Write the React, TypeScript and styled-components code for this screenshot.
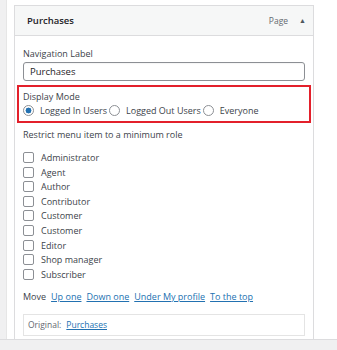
import React from 'react'
import styled, { createGlobalStyle } from 'styled-components'

const COLORS = {
  text: '#3c434a',
  dark: '#1d2327',
  muted: '#646970',
  border: '#dcdcde',
  field: '#8c8f94',
  link: '#2271b1',
  red: '#e3202b',
  gray: '#f0f0f1',
  head: '#f6f7f7',
}

const GlobalStyle = createGlobalStyle`
  body {
    margin: 0;
    background: #fff;
    font-family: 'Open Sans', 'Noto Sans', sans-serif;
    color: ${COLORS.text};
  }
`

const roles = [
  'Administrator',
  'Agent',
  'Author',
  'Contributor',
  'Customer',
  'Customer',
  'Editor',
  'Shop manager',
  'Subscriber',
]

const modes = [
  { label: 'Logged In Users', checked: true },
  { label: 'Logged Out Users', checked: false },
  { label: 'Everyone', checked: false },
]

const moves = ['Up one', 'Down one', 'Under My profile', 'To the top']

const App = () => {
  return (
    <>
      <GlobalStyle />
      <Page>
        <Top>
          <Strip />
          <Content>
            <Panel>
              <Header>
                <Title>Purchases</Title>
                <Controls>
                  <Type>Page</Type>
                  <Arrow>▲</Arrow>
                </Controls>
              </Header>

              <Body>
                <Label>Navigation Label</Label>
                <Input>Purchases</Input>

                <Highlight>
                  <Label>Display Mode</Label>
                  <RadioRow>
                    {modes.map(m => (
                      <RadioItem key={m.label}>
                        <Radio checked={m.checked} />
                        {m.label}
                      </RadioItem>
                    ))}
                  </RadioRow>
                </Highlight>

                <Label>Restrict menu item to a minimum role</Label>

                <Roles>
                  {roles.map((r, i) => (
                    <RoleItem key={i}>
                      <Box />
                      {r}
                    </RoleItem>
                  ))}
                </Roles>

                <MoveRow>
                  Move
                  {moves.map(m => (
                    <A key={m}>{m}</A>
                  ))}
                </MoveRow>

                <Original>
                  Original: <A>Purchases</A>
                </Original>
              </Body>
            </Panel>
          </Content>
        </Top>
        <Footer />
      </Page>
    </>
  )
}

const Page = styled('div')`
  width: 337px;
  height: 350px;
  display: flex;
  flex-direction: column;
  overflow: hidden;
`

const Top = styled('div')`
  height: 339px;
  display: flex;
`

const Strip = styled('div')`
  width: 6px;
  background: ${COLORS.gray};
  border-right: 1px solid #e6e6e6;
`

const Content = styled('div')`
  flex: 1;
  padding: 5px 0 0 7px;
`

const Panel = styled('div')`
  width: 300px;
  height: 100%;
  box-sizing: border-box;
  border: 1px solid ${COLORS.border};
  border-bottom: none;
  background: #fff;
`

const Header = styled('div')`
  height: 30px;
  box-sizing: border-box;
  background: ${COLORS.head};
  border-bottom: 1px solid ${COLORS.border};
  display: flex;
  align-items: center;
  justify-content: space-between;
  padding: 0 7px 0 12px;
`

const Title = styled('div')`
  font-size: 9.5px;
  font-weight: 600;
  color: ${COLORS.dark};
`

const Controls = styled('div')`
  display: flex;
  align-items: center;
  gap: 11px;
`

const Type = styled('span')`
  font-size: 8.5px;
  color: ${COLORS.muted};
`

const Arrow = styled('span')`
  font-size: 7px;
  color: #50575e;
`

const Body = styled('div')`
  padding: 11px 8px 0 8px;
  font-size: 9px;
`

const Label = styled('div')`
  line-height: 13px;
`

const Input = styled('div')`
  margin-top: 2px;
  height: 19px;
  box-sizing: border-box;
  border: 1px solid ${COLORS.field};
  border-radius: 3px;
  padding: 0 6px;
  display: flex;
  align-items: center;
  font-size: 9.5px;
  color: ${COLORS.dark};
  box-shadow: inset 0 1px 1px rgba(0, 0, 0, 0.04);
`

const Highlight = styled('div')`
  margin: 4px -6px 5px -6px;
  border: 2px solid ${COLORS.red};
  padding: 3px 4px 4px;
`

const RadioRow = styled('div')`
  display: flex;
  margin-top: 1px;
`

const RadioItem = styled('label')`
  display: flex;
  align-items: center;
  gap: 6px;
  margin-right: 2px;
  line-height: 13px;
`

const Radio = styled('span')<{ checked: boolean }>`
  width: 11px;
  height: 11px;
  box-sizing: border-box;
  border-radius: 50%;
  border: 1px solid ${COLORS.field};
  background: ${p => (p.checked ? `radial-gradient(circle, ${COLORS.link} 0 2.7px, #fff 3.2px)` : '#fff')};
`

const Roles = styled('div')`
  margin-top: 10px;
  display: flex;
  flex-direction: column;
  gap: 1.6px;
`

const RoleItem = styled('label')`
  display: flex;
  align-items: center;
  gap: 7px;
  height: 13px;
`

const Box = styled('span')`
  width: 11px;
  height: 11px;
  box-sizing: border-box;
  border: 1px solid ${COLORS.field};
  border-radius: 2px;
  background: #fff;
`

const MoveRow = styled('div')`
  margin-top: 9px;
  display: flex;
  gap: 5px;
  line-height: 13px;
`

const A = styled('a')`
  color: ${COLORS.link};
  text-decoration: underline;
  cursor: pointer;
`

const Original = styled('div')`
  margin-top: 11px;
  height: 22px;
  box-sizing: border-box;
  border: 1px solid #e4e4e4;
  padding: 0 4px;
  display: flex;
  align-items: center;
  gap: 5px;
  font-size: 8.5px;
  color: ${COLORS.muted};
`

const Footer = styled('div')`
  flex: 1;
  background: ${COLORS.gray};
  border-top: 1px solid ${COLORS.border};
`

export default App
